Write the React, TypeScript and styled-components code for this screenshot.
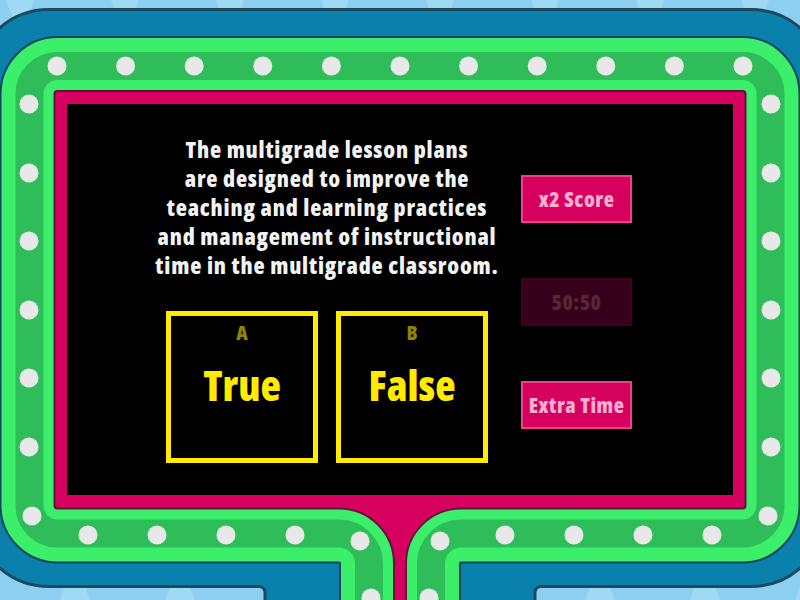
import styled, { createGlobalStyle } from 'styled-components';

const GlobalStyle = createGlobalStyle`
  html, body {
    margin: 0;
    padding: 0;
    background: #8ccff0;
  }
  body {
    font-family: 'Open Sans', 'Liberation Sans', sans-serif;
  }
`;

const FONT = `'Open Sans', 'DejaVu Sans Condensed', 'Liberation Sans', sans-serif`;

type Loop = {
  t: number;
  l: number;
  r: number;
  b: number;
  ll: number;
  rl: number;
  rc: number;
  rv: number;
};

// rounded frame whose two ends drop down in the middle (the stand of the board)
const loopPath = (p: Loop, closed = false) => {
  const { t, l, r, b, ll, rl, rc, rv } = p;
  const end = 640;
  const d = [
    `M ${ll} ${end}`,
    `L ${ll} ${b + rv}`,
    `A ${rv} ${rv} 0 0 0 ${ll - rv} ${b}`,
    `L ${l + rc} ${b}`,
    `A ${rc} ${rc} 0 0 1 ${l} ${b - rc}`,
    `L ${l} ${t + rc}`,
    `A ${rc} ${rc} 0 0 1 ${l + rc} ${t}`,
    `L ${r - rc} ${t}`,
    `A ${rc} ${rc} 0 0 1 ${r} ${t + rc}`,
    `L ${r} ${b - rc}`,
    `A ${rc} ${rc} 0 0 1 ${r - rc} ${b}`,
    `L ${rl + rv} ${b}`,
    `A ${rv} ${rv} 0 0 0 ${rl} ${b + rv}`,
    `L ${rl} ${end}`,
  ];
  if (closed) d.push('Z');
  return d.join(' ');
};

const OUTER: Loop = { t: 9.5, l: -26, r: 826, b: 586.5, ll: 265, rl: 535, rc: 75, rv: 6 };
const TUBE: Loop = { t: 64, l: 27.5, r: 772.5, b: 535.5, ll: 367, rl: 433, rc: 30, rv: 28 };
const BAND: Loop = { t: 66, l: 29.5, r: 770.5, b: 533.5, ll: 369, rl: 431, rc: 28, rv: 30 };

const topDots = Array.from({ length: 11 }, (_, i) => [57 + i * 68.6, 66]);
const sideY = [104, 173, 241, 310, 378, 447];
const bulbs: number[][] = [
  ...topDots,
  ...sideY.map((y) => [29, y]),
  ...sideY.map((y) => [771, y]),
  [32, 516],
  [768, 516],
  ...[88, 157, 226, 295].map((x) => [x, 535]),
  ...[505, 574, 643, 712].map((x) => [x, 535]),
  [360, 541],
  [371, 598],
  [440, 541],
  [429, 598],
];

// faint peaks in the sky behind the board
const peaks = Array.from({ length: 9 }, (_, i) => 20 + i * 105);

const QUESTION = [
  'The multigrade lesson plans',
  'are designed to improve the',
  'teaching and learning practices',
  'and management of instructional',
  'time in the multigrade classroom.',
];

const ANSWERS = [
  { key: 'A', text: 'True' },
  { key: 'B', text: 'False' },
];

const POWER_UPS = [
  { label: 'x2 Score', used: false },
  { label: '50:50', used: true },
  { label: 'Extra Time', used: false },
];

const Stage = styled.div`
  position: relative;
  width: 800px;
  height: 600px;
  overflow: hidden;
  box-sizing: border-box;
  padding: 104px 0 0 67px;
  background: #8ccff0;
`;

const Backdrop = styled.svg`
  position: absolute;
  left: 0;
  top: 0;
  width: 800px;
  height: 600px;
`;

const Screen = styled.main`
  position: relative;
  width: 666px;
  height: 391px;
  box-sizing: border-box;
  padding-left: 80px;
  background: #000;
  display: grid;
  grid-template-columns: 360px 111px;
  column-gap: 14px;
`;

const QuestionArea = styled.section`
  display: flex;
  flex-direction: column;
  align-items: center;
  padding-top: 31px;
`;

const Question = styled.h1`
  margin: 0;
  font-family: ${FONT};
  font-stretch: 75%;
  font-weight: 800;
  font-size: 23px;
  line-height: 29px;
  letter-spacing: 0.8px;
  color: #f2f2f2;
  text-align: center;
  white-space: nowrap;
`;

const Line = styled.span`
  display: block;
`;

const Answers = styled.div`
  display: flex;
  gap: 18px;
  margin-top: 31px;
`;

const AnswerBox = styled.button`
  width: 152px;
  height: 152px;
  box-sizing: border-box;
  border: 5px solid #ffea00;
  background: #000;
  padding: 0;
  display: flex;
  flex-direction: column;
  align-items: center;
  font-family: ${FONT};
  font-stretch: 75%;
  font-weight: 800;
  cursor: pointer;
`;

const AnswerKey = styled.span`
  margin-top: 6px;
  font-size: 20px;
  line-height: 22px;
  color: #8e8400;
`;

const AnswerText = styled.span`
  margin-top: 16px;
  font-size: 42px;
  line-height: 50px;
  color: #ffea00;
`;

const PowerUps = styled.aside`
  display: flex;
  flex-direction: column;
  gap: 55px;
  padding-top: 71px;
`;

const PowerUp = styled.button<{ $used: boolean }>`
  width: 111px;
  height: 48px;
  box-sizing: border-box;
  border: 2px solid ${(p) => (p.$used ? '#41001e' : '#f0408a')};
  background: ${(p) => (p.$used ? '#36001a' : '#d6005f')};
  color: ${(p) => (p.$used ? '#5b2438' : '#ffb0d2')};
  font-family: ${FONT};
  font-stretch: 75%;
  font-weight: 800;
  font-size: 21px;
  letter-spacing: 0.5px;
  padding: 0;
  white-space: nowrap;
  cursor: ${(p) => (p.$used ? 'default' : 'pointer')};
`;

const Frame = () => (
  <Backdrop viewBox="0 0 800 600" aria-hidden>
    {peaks.map((x) => (
      <polygon key={`t${x}`} points={`${x - 14},0 ${x + 14},0 ${x},40`} fill="#a0d9f4" />
    ))}
    {peaks.map((x) => (
      <polygon key={`b${x}`} points={`${x + 40},600 ${x + 70},600 ${x + 55},560`} fill="#a0d9f4" />
    ))}
    <path d={loopPath(OUTER, true)} fill="#0a80ad" stroke="#1c4a5c" strokeWidth={3} />
    <path d={loopPath(TUBE, true)} fill="#d6005f" />
    <path d={loopPath(TUBE)} fill="none" stroke="rgba(18,28,40,0.6)" strokeWidth={56} />
    <path d={loopPath(TUBE)} fill="none" stroke="#3cef6a" strokeWidth={52} />
    <path d={loopPath(BAND)} fill="none" stroke="#2ebd58" strokeWidth={28} />
    {bulbs.map(([x, y], i) => (
      <circle key={i} cx={x} cy={y} r={9.5} fill="#e8e8e8" />
    ))}
  </Backdrop>
);

export default function App() {
  return (
    <>
      <GlobalStyle />
      <Stage>
        <Frame />
        <Screen>
          <QuestionArea>
            <Question>
              {QUESTION.map((line) => (
                <Line key={line}>{line}</Line>
              ))}
            </Question>
            <Answers>
              {ANSWERS.map((a) => (
                <AnswerBox key={a.key}>
                  <AnswerKey>{a.key}</AnswerKey>
                  <AnswerText>{a.text}</AnswerText>
                </AnswerBox>
              ))}
            </Answers>
          </QuestionArea>
          <PowerUps>
            {POWER_UPS.map((p) => (
              <PowerUp key={p.label} $used={p.used} disabled={p.used}>
                {p.label}
              </PowerUp>
            ))}
          </PowerUps>
        </Screen>
      </Stage>
    </>
  );
}
